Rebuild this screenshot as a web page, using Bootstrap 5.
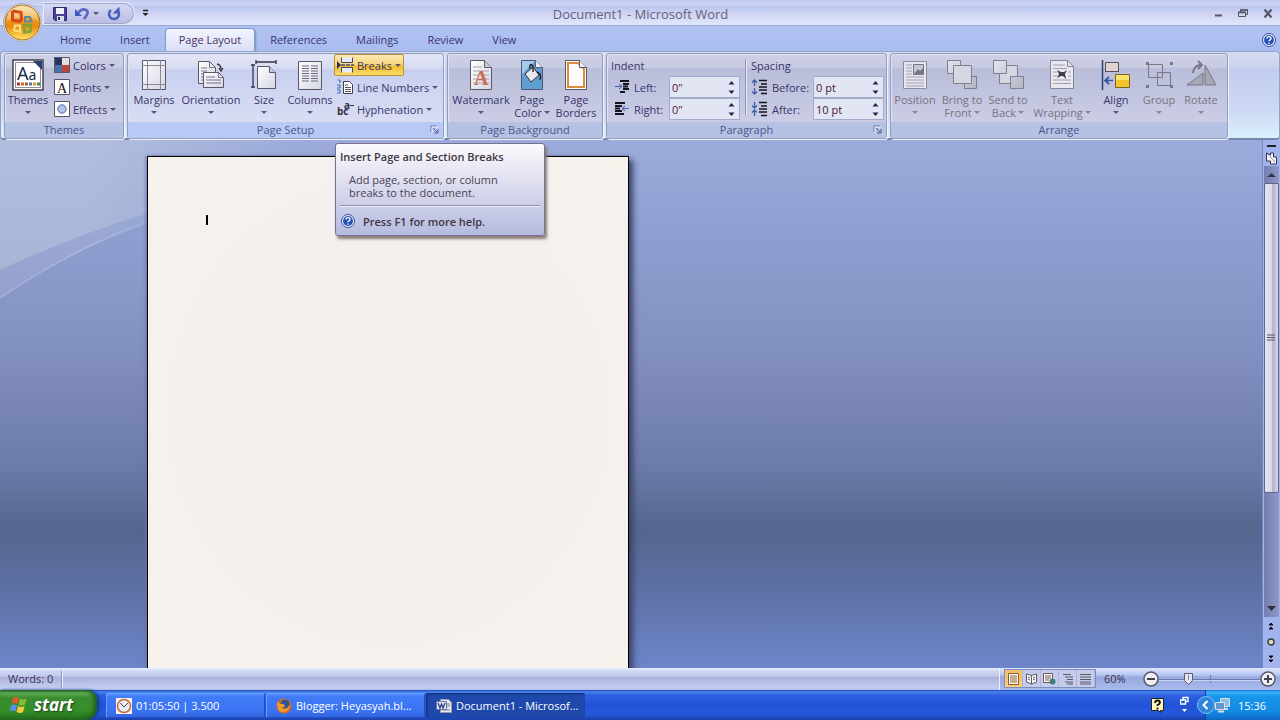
<!DOCTYPE html>
<html lang="en">
<head>
<meta charset="utf-8">
<meta name="viewport" content="width=device-width, initial-scale=1">
<title>Document1 - Microsoft Word</title>
<link href="https://cdn.jsdelivr.net/npm/bootstrap@5.3.0/dist/css/bootstrap.min.css" rel="stylesheet">
<style>
body{font-family:"Open Sans","Noto Sans",sans-serif;font-size:11px;line-height:13px;color:#39346a;background:#acbdf0}
button,input{font:inherit;color:inherit}
.app-window{height:100vh;min-height:480px}
button.flat{border:0;background:none;padding:0}
svg{flex:none;display:block}
.defs{width:0;height:0;position:absolute}
/* title bar */
.title-bar{height:26px;background:linear-gradient(#c3cbf1 0,#cfd6f6 5px,#bac5ef 6px,#d2d6f3 15px,#dfe8fc 25px);border-bottom:1px solid #98a8cf}
.office-btn{left:3px;top:3px;z-index:3}
.quick-bar{height:21px;margin-left:44px;margin-top:3px;padding:0 12px 0 9px;gap:8px;border:1px solid #a3a5c9;border-left:0;border-radius:0 11px 11px 0;background:linear-gradient(#d5d9f2,#babde2);box-shadow:0 0 0 1px #e7eafa}
.win-title{font-size:13px;line-height:18px;color:#665f80;padding:5px 82px 0 0}
.win-buttons{gap:15px;padding:9px 7px 0 0}
/* tabs */
.tab-row{height:25px;padding:2px 4px 0 46px;background:linear-gradient(#b2c3f3,#a9bcf0)}
.tab-row .nav-link{font-size:11px;line-height:14px;color:#39346a;padding:4px 13px 5px;border:1px solid transparent;border-bottom:0;border-radius:4px 4px 0 0}
.tab-row .nav-link.active{background:linear-gradient(#f3f5ff,#d9def5);border-color:#7f9bd0;color:#4a2f63;box-shadow:1px 1px 2px #7d90c4}
.tab-list{gap:1px}
/* ribbon */
.ribbon{height:89px;padding:1px 3px;background:linear-gradient(#d6dcf0 0,#ccd3ee 14px,#c2cced 17px,#cedaf4 60px,#d9f1fc 86px);border:1px solid #8ea4c9;border-bottom:2px solid #7886ab;border-radius:4px;gap:3px}
.grp{height:86px;border:1px solid #959bbd;border-radius:3px;background:linear-gradient(#cdd0e6 0,#c8cbe2 13px,#b9bdd9 15px,#cbcde6 67px);box-shadow:1px 1px 0 #eef2fd,inset 1px 1px 0 #dfe2f2}
.grp.lit{background:linear-gradient(#e3e6f5 0,#d8dcf2 14px,#c8cfef 16px,#d9ddf4 67px)}
.grp-body{height:68px}
.grp-name{height:16px;line-height:16px;text-align:center;color:#4b568f;background:#b6c2e4;position:relative}
.lit .grp-name{background:#b7c9f4}
.launcher{right:4px;top:3px}
.g-themes{width:120px}.g-setup{width:317px}.g-bg{width:156px}.g-para{width:281px}.g-arr{width:338px}
.big{display:flex;flex-direction:column;align-items:center;white-space:nowrap;padding-top:3px!important}
.big .ico{height:36px;display:flex;align-items:center}
.big .lbl{height:13px;display:flex;align-items:center;gap:2px;margin-top:0}
.big.off{color:#77747f}
.caret{width:0;height:0;border:3px solid transparent;border-top-color:currentColor;border-bottom:0;opacity:.8}
.w36{width:36px}.w40{width:40px}.w44{width:44px}.w46{width:46px}.w48{width:48px}.w52{width:52px}.w62{width:62px}.w66{width:66px}
.small-btn{display:flex;align-items:center;height:22px;gap:3px;padding:0 3px!important;white-space:nowrap;border-radius:2px}
.small-btn.hot{border:1px solid #b6923a!important;padding:0 2px!important;background:linear-gradient(#fbeab4 0,#f6d67c 10px,#f1bd2e 11px,#f8dc66)!important}
.field{height:22px;gap:5px}
.field label{width:30px}
.field.wide label{width:36px;margin-left:-1px;white-space:nowrap}
.field .box{width:71px;height:22px;position:relative}
.field input{width:100%;height:22px;border:1px solid #a4aacb;background:#e2e6f4;padding:0 2px;color:#4b1236;border-radius:0}
.spin{right:5px;top:5px}
.rule{width:2px;height:56px;border-left:1px solid #8f96bb;border-right:1px solid #e3e6f4;margin:5px 4px 0 5px}
/* document */
.desk{position:relative;min-height:0;overflow:hidden;background:linear-gradient(#9cabdb 0,#91a0d2 15%,#828fc1 40%,#6f7dab 60%,#56668f 74%,#5c6ea0 83%,#6d85c9 100%)}
.swoosh{left:0;top:0;z-index:0}
.sheet{width:482px;margin:16px 0 0 147px;border:1px solid #000;border-bottom:0;background:radial-gradient(ellipse at center,#f3f0ee 60%,#f6f3ed);box-shadow:4px 4px 6px #3b4268,-1px 0 3px #6d78a6;z-index:1}
.sheet-text{border:0;background:none;width:100%;height:100%;padding:56px 58px;outline:0;resize:none;font:16px "Liberation Serif",serif}
.insertion{left:58px;top:58px;width:2px;height:10px;background:#000}
.hint{left:335px;top:143px;width:210px;z-index:5;border:1px solid #767190;border-radius:3px;padding:6px 4px 7px;color:#4b4353;background:linear-gradient(#fbfbfd,#dcdcee 45%,#b5bbdf);box-shadow:2px 3px 3px #8b7a75}
.hint p{margin:10px 0 6px 9px}
.hint-head{font-weight:600;color:#40363f}
.hint-help{border-top:1px solid #8f8fb2;box-shadow:inset 0 1px 0 #eef;padding:8px 0 0 1px;gap:8px}
.sb{width:18px;padding-right:1px;background:#a2b4ee;border-left:1px solid #7588bd}
.sb-track{width:15px;background:linear-gradient(90deg,#737eaf,#8f99c8)}
.thumb{height:310px;border:1px solid #62678a;border-radius:2px;background:linear-gradient(90deg,#e4e3f0 0,#d9d9e8 50%,#b6abc8 60%,#ddd8ea)}
/* status bar */
.status{height:22px;background:linear-gradient(#eaf1ff 0,#cdd7f5 3px,#c3c9ea 8px,#acb2de 9px,#c4cdf0 20px,#aabbe8);color:#39304f}
.status .seg{line-height:22px}
.status-right{border-left:1px solid #eef2ff;background:linear-gradient(#dfe7ff 0,#b6c5f2 7px,#98a9df 9px,#a9bbec);width:281px}
.views{border:1px solid #7c8dbf;background:#c5cbea;height:19px;margin:1px 0 0 4px}
.views button{width:18px;height:17px;display:flex;align-items:center;justify-content:center;border-right:1px solid #aeb6d9!important}
.views button.on{background:linear-gradient(#f6bd6b,#f9cf78)}
.zoom-line{width:101px;height:22px}
/* taskbar */
.taskbar{height:30px;background:linear-gradient(#1d48b4 0,#4b84f0 2px,#2e62e0 5px,#2353d6 14px,#2459dc 24px,#1b40ae 30px);color:#fff}
.start-btn{width:97px;background:linear-gradient(#2f6c2a 0,#63ae54 3px,#3a8b31 8px,#369028 20px,#246d1f 30px)!important;border-radius:0 10px 12px 0;box-shadow:inset -3px 0 4px #1f5c1c,2px 0 3px #123b8f;color:#fff;font:italic bold 17px/28px "Noto Sans","Open Sans",sans-serif;text-shadow:1px 1px 2px #1b3d17;gap:6px;padding:0 0 0 10px!important}
.tasks{gap:1px;margin-left:9px;padding-bottom:2px}
.task{width:159px;height:25px;border-radius:2px;background:linear-gradient(#5a94ff 0,#3f7bf7 4px,#3a73f2 18px,#3164dc)!important;box-shadow:inset 1px 1px 0 #6ba0ff,inset -1px -1px 0 #2450bd;gap:4px;padding:0 8px 0 10px!important;color:#fff;white-space:nowrap}
.task.on{background:#1e48a9!important;box-shadow:inset 1px 1px 2px #102d77}
.tray{background:linear-gradient(#0f6fd0 0,#3db2f6 2px,#1796ea 6px,#1289e3 22px,#0f68c4 30px);width:75px;border-left:1px solid #0a3fa0}
.tray-toggle{margin-left:-9px}
</style>
</head>
<body>
<svg class="defs" aria-hidden="true">
  <defs>
    <linearGradient id="gold" x1="0" y1="0" x2="0" y2="1"><stop offset="0" stop-color="#fbe3a8"/><stop offset=".35" stop-color="#efa32f"/><stop offset=".6" stop-color="#e78a12"/><stop offset="1" stop-color="#ffe564"/></linearGradient>
    <linearGradient id="glass" x1="0" y1="0" x2="1" y2="1"><stop offset="0" stop-color="#fff"/><stop offset="1" stop-color="#d4d6e4"/></linearGradient>
    <linearGradient id="gray" x1="0" y1="0" x2="1" y2="1"><stop offset="0" stop-color="#e3e4ee"/><stop offset="1" stop-color="#b4b5c4"/></linearGradient>
    <symbol id="help" viewBox="0 0 14 14"><circle cx="7" cy="7" r="6.500" fill="#e8edfb" stroke="#3a519c"/><circle cx="7" cy="7" r="4.900" fill="#2450b8"/><path d="M5 5.600q0-2 2-2t2 1.800q0 1-1.200 1.600Q7 7.500 7 8.300M7 9.400v1.300" fill="none" stroke="#fff" stroke-width="1.400"/></symbol>
    <symbol id="launch" viewBox="0 0 9 9"><path d="M1 7V1h6" fill="none" stroke="#66709b"/><path d="M3 3l4 4M8 4v4H4" fill="none" stroke="#4b568f"/><path d="M2 8V2h6" fill="none" stroke="#eef"/></symbol>
    <symbol id="spinner" viewBox="0 0 7 13"><path d="M.5 3.500L3.500 0l3 3.500zM.5 9.500L3.500 13l3-3.500z" fill="#26264a"/></symbol>
  </defs>
</svg>

<div class="app-window d-flex flex-column position-relative">
  <button class="office-btn flat position-absolute" aria-label="Office Button">
    <svg width="39" height="39" viewBox="0 0 39 39"><circle cx="19.500" cy="19.500" r="19" fill="#f4f2f5" stroke="#a7a9bd"/><circle cx="19.500" cy="19.500" r="17.500" fill="url(#gold)" stroke="#a66a22"/><path d="M4 17Q4 4 19.500 4T35 17Q20 12 4 17z" fill="#fff" opacity=".3"/>
    <g fill="none" stroke-width="3"><path d="M18 9.500l-7-1.500-1.500 1v8l7 1.500 2-2z" stroke="#d64b17"/><path d="M22 14h5l1.500 4.500H22z" stroke="#5e8a9e" stroke-width="2"/><path d="M12 22.500h5v6l-6-1z" stroke="#ffe07a" stroke-width="2"/><path d="M21 22h6.500v6.500l-6 1z" stroke="#7ba534" stroke-width="2.500"/></g></svg>
  </button>

  <header class="title-bar d-flex">
    <div class="quick-bar d-flex align-items-center">
      <button class="flat" aria-label="Save"><svg width="14" height="14"><path d="M.5.5h13v13H2L.5 12z" fill="#4b3f9a" stroke="#302a70"/><path d="M3 1h8v6H3z" fill="#eef0fc"/><path d="M4 9h7v5H4z" fill="#d6dbe9"/><path d="M5 10h2v3H5z" fill="#302a70"/></svg></button>
      <button class="flat d-flex align-items-center gap-1" aria-label="Undo"><svg width="14" height="13"><path d="M3 6q4-5 8-3t-2 9" fill="none" stroke="#5a6cc6" stroke-width="2.800"/><path d="M0 2v7h7z" fill="#4258b8"/></svg><span class="caret"></span></button>
      <button class="flat" aria-label="Repeat"><svg width="14" height="14"><path d="M10 3a5 5 0 1 1-6 0" fill="none" stroke="#4a60bd" stroke-width="2.600"/><path d="M6 0v7h7z" fill="#4a60bd" transform="rotate(-90 9 3.500)"/></svg></button>
    </div>
    <button class="flat ms-2" aria-label="Customize Quick Access Toolbar"><svg width="7" height="8"><path d="M1 1.500h5" stroke="#222" stroke-width="1.500"/><path d="M.5 4h6L3.500 7z" fill="#222"/></svg></button>
    <div class="win-title flex-grow-1 text-center">Document1 - Microsoft Word</div>
    <div class="win-buttons d-flex align-items-start">
      <button class="flat" aria-label="Minimize"><svg width="9" height="9"><path d="M1 6.500h7" stroke="#555567" stroke-width="2"/></svg></button>
      <button class="flat" aria-label="Restore"><svg width="10" height="9"><path d="M2.500 3V1h7v4.500H8M.5 3h7v4.500h-7z" fill="none" stroke="#555567"/><path d="M0 3.500h8M2 1h8" stroke="#555567" stroke-width="1.500"/></svg></button>
      <button class="flat" aria-label="Close"><svg width="10" height="9"><path d="M1.500.5l7 8M8.500.5l-7 8" stroke="#555567" stroke-width="2.200"/></svg></button>
    </div>
  </header>

  <nav class="tab-row d-flex justify-content-between">
    <div class="tab-list nav flex-nowrap">
      <a class="nav-link" href="#">Home</a>
      <a class="nav-link" href="#">Insert</a>
      <a class="nav-link active" href="#">Page Layout</a>
      <a class="nav-link" href="#">References</a>
      <a class="nav-link" href="#">Mailings</a>
      <a class="nav-link" href="#">Review</a>
      <a class="nav-link" href="#">View</a>
    </div>
    <button class="flat" aria-label="Help"><svg width="14" height="14"><use href="#help"/></svg></button>
  </nav>

  <div class="ribbon d-flex">
    <section class="grp g-themes">
      <div class="grp-body d-flex">
        <button class="flat big w46"><span class="ico"><svg width="32" height="32"><path d="M1 1h30v30H1z" fill="#fff" stroke="#44404f" stroke-width="1.500"/><path d="M3.500 3.500h25v25h-25z" fill="none" stroke="#8d8a99"/><path d="M21 2h9v9z" fill="#2a4070"/><text x="5" y="21" font-size="18" font-family="Noto Sans" fill="#1e2b4b">A<tspan font-size="14">a</tspan></text><path d="M5 25h3" stroke="#a33" stroke-width="3"/><path d="M9 25h3" stroke="#c63" stroke-width="3"/><path d="M13 25h3" stroke="#963" stroke-width="3"/><path d="M17 25h3" stroke="#57a" stroke-width="3"/><path d="M21 25h3" stroke="#c93" stroke-width="3"/><path d="M25 25h3" stroke="#484" stroke-width="3"/></svg></span><span class="lbl">Themes</span><span class="lbl"><i class="caret"></i></span></button>
        <div>
          <button class="flat small-btn"><svg width="16" height="16"><path d="M0 0h8v8H0z" fill="#26345f"/><path d="M8 0h8v8H8z" fill="#e5dfe2"/><path d="M0 8h8v8H0z" fill="#4873a8"/><path d="M8 8h8v8H8z" fill="#c0433b"/><path d="M.5.5h15v15H.5z" fill="none" stroke="#5c5874"/></svg>Colors<i class="caret"></i></button>
          <button class="flat small-btn"><svg width="16" height="16"><path d="M.5.5h15v15H.5z" fill="#fff" stroke="#55526a"/><text x="3" y="13.500" font-size="14" font-family="Liberation Serif" fill="#111">A</text></svg>Fonts<i class="caret"></i></button>
          <button class="flat small-btn"><svg width="16" height="16"><path d="M.5.5h15v15H.5z" fill="#fff" stroke="#55526a"/><circle cx="8" cy="8" r="4.200" fill="#b1c5ee" stroke="#566a9e"/></svg>Effects<i class="caret"></i></button>
        </div>
      </div>
      <div class="grp-name">Themes</div>
    </section>

    <section class="grp lit g-setup">
      <div class="grp-body d-flex">
        <button class="flat big w52"><span class="ico"><svg width="26" height="32"><path d="M1.500 1.500h23v29h-23z" fill="url(#glass)" stroke="#5b5767"/><path d="M6.500 1v30M19.500 1v30M1 6.500h24M1 25.500h24" stroke="#8c8896"/></svg></span><span class="lbl">Margins</span><span class="lbl"><i class="caret"></i></span></button>
        <button class="flat big w62"><span class="ico"><svg width="28" height="30"><path d="M1.500 1.500h11l6 6v16h-17z" fill="url(#glass)" stroke="#5b5767"/><path d="M12.500 1.500v6h6M4 8h6M4 11h6M4 14h4M4 17h4M4 20h3" fill="none" stroke="#77748a"/><path d="M6.500 12.500h15l5 5v10h-20z" fill="url(#glass)" stroke="#5b5767"/><path d="M21.500 12.500v5h5M9 17h9M9 20h15M9 23h15" fill="none" stroke="#77748a"/><path d="M20 4q4 1 4 5M22 8l2 3 2-3" fill="none" stroke="#333" stroke-width="1.300"/></svg></span><span class="lbl">Orientation</span><span class="lbl"><i class="caret"></i></span></button>
        <button class="flat big w44"><span class="ico"><svg width="26" height="32"><path d="M5 3h20M5 1v4M25 1v4M2 6v22M0 6h4M0 28h4" stroke="#35324c" stroke-width="1.300"/><path d="M6.500 7.500h12l6 6v16h-18z" fill="url(#glass)" stroke="#5b5767"/><path d="M18.500 7.500v6h6" fill="#cacbd9" stroke="#5b5767"/></svg></span><span class="lbl">Size</span><span class="lbl"><i class="caret"></i></span></button>
        <button class="flat big w48"><span class="ico"><svg width="26" height="32"><path d="M1.500 2.500h23v28h-23z" fill="url(#glass)" stroke="#5b5767"/><path d="M5 7h7M14 7h7M5 9.500h7M14 9.500h7M5 12h7M14 12h7M5 14.500h7M14 14.500h7M5 17h7M14 17h7M5 19.500h7M14 19.500h7M5 22h7M14 22h7" stroke="#6d6980"/></svg></span><span class="lbl">Columns</span><span class="lbl"><i class="caret"></i></span></button>
        <div>
          <button class="flat small-btn hot"><svg width="17" height="16"><path d="M4.500.5v5h11v-5M4.500 15.500v-5h11v5" fill="#e7ebf6" stroke="#44496a"/><path d="M4 8h13" stroke="#44496a" stroke-width="1.500" stroke-dasharray="4 1"/><path d="M0 4l4 4-4 4z" fill="#26324f"/></svg>Breaks<i class="caret"></i></button>
          <button class="flat small-btn"><svg width="17" height="16"><path d="M1 1h2v3M0 6h3v3H0M0 11h3v3H0" fill="none" stroke="#3f69b3"/><path d="M6.500 2.500h6l3 3v9h-9z" fill="#fff" stroke="#44404f"/><path d="M8 6h3M8 8.500h6M8 10.500h6M8 12.500h6" stroke="#555"/></svg>Line Numbers<i class="caret"></i></button>
          <button class="flat small-btn"><svg width="17" height="16"><text x="0" y="14" font-size="10" font-weight="bold" font-family="Open Sans" fill="#33313d">bc<tspan x="7" y="8">a</tspan></text><path d="M13 4.500h4" stroke="#33313d"/></svg>Hyphenation<i class="caret"></i></button>
        </div>
      </div>
      <div class="grp-name">Page Setup<button class="flat launcher position-absolute" aria-label="Page Setup options"><svg width="9" height="9"><use href="#launch"/></svg></button></div>
    </section>

    <section class="grp g-bg">
      <div class="grp-body d-flex">
        <button class="flat big w66"><span class="ico"><svg width="24" height="32"><path d="M1.500 1.500h14l7 7v22h-21z" fill="url(#glass)" stroke="#5b5767"/><path d="M15.500 1.500v7h7" fill="#cacbd9" stroke="#5b5767"/><path d="M4 8h9M4 12h16M4 16h16M4 20h16M4 24h16" stroke="#a5a2ae"/><text x="5" y="26" font-size="20" font-family="Liberation Serif" font-weight="bold" fill="#d0694f">A</text></svg></span><span class="lbl">Watermark</span><span class="lbl"><i class="caret"></i></span></button>
        <button class="flat big w36"><span class="ico"><svg width="24" height="32"><path d="M1.500 1.500h14l7 7v22h-21z" fill="#5e9fd0" stroke="#4b5878"/><path d="M2 2h13L2 15z" fill="#a6cbe8"/><path d="M15.500 1.500v7h7" fill="#eef" stroke="#5b5767"/><path d="M5 15l8-7 6 8-8 7z" fill="#e9e9ef" stroke="#333"/><path d="M10 10q-1-7 3-3v6M17 13q5 2 3 8" fill="none" stroke="#222" stroke-width="1.400"/></svg></span><span class="lbl">Page</span><span class="lbl">Color<i class="caret"></i></span></button>
        <button class="flat big w52"><span class="ico"><svg width="24" height="32"><path d="M1.500 1.500h14l7 7v22h-21z" fill="#fff" stroke="#5b5767"/><path d="M4 4h10l6 6v18H4z" fill="#fdfdff" stroke="#e08a3c" stroke-width="2"/><path d="M15.500 1.500v7h7" fill="#eef" stroke="#5b5767"/></svg></span><span class="lbl">Page</span><span class="lbl">Borders</span></button>
      </div>
      <div class="grp-name">Page Background</div>
    </section>

    <section class="grp g-para">
      <div class="grp-body d-flex ps-1">
        <div>
          <div class="field d-flex align-items-center">Indent</div>
          <div class="field d-flex align-items-center"><svg class="ms-1" width="14" height="14"><path d="M5 1h10M8 4h7M8 6.500h5M8 9h7M5 12h5" stroke="#14141c" stroke-width="1.800"/><path d="M0 6.500h6M4 4l3 2.500L4 9" fill="none" stroke="#3e5fae"/></svg><label for="il">Left:</label><div class="box"><input id="il" value="0&quot;"><button class="flat spin position-absolute" aria-label="Change left indent"><svg width="7" height="13"><use href="#spinner"/></svg></button></div></div>
          <div class="field d-flex align-items-center"><svg class="ms-1" width="14" height="14"><path d="M0 1h10M0 4h7M0 6.500h5M0 9h7M0 12h9" stroke="#14141c" stroke-width="1.800"/><path d="M8 6.500h6M10 4L7 6.500 10 9" fill="none" stroke="#3e5fae"/></svg><label for="ir">Right:</label><div class="box"><input id="ir" value="0&quot;"><button class="flat spin position-absolute" aria-label="Change right indent"><svg width="7" height="13"><use href="#spinner"/></svg></button></div></div>
        </div>
        <div class="rule"></div>
        <div>
          <div class="field d-flex align-items-center">Spacing</div>
          <div class="field wide d-flex align-items-center"><svg width="17" height="16"><path d="M8 1.500h8M10 5h6M8 11h8M10 14.500h6M8 8h8" stroke="#14141c" stroke-width="1.400"/><path d="M3.500 7V1M1 3.500L3.500 1 6 3.500M3.500 9v6M1 12.500L3.500 15 6 12.500" fill="none" stroke="#3e5fae" stroke-width="1.300"/></svg><label for="sbf">Before:</label><div class="box"><input id="sbf" value="0 pt"><button class="flat spin position-absolute" aria-label="Change spacing before"><svg width="7" height="13"><use href="#spinner"/></svg></button></div></div>
          <div class="field wide d-flex align-items-center"><svg width="17" height="16"><path d="M8 1.500h8M10 5h6M8 11h8M10 14.500h6M8 8h8" stroke="#14141c" stroke-width="1.400"/><path d="M3.500 1v6M1 4.500L3.500 7 6 4.500M3.500 15V9M1 11.500L3.500 9 6 11.500" fill="none" stroke="#3e5fae" stroke-width="1.300"/></svg><label for="saf">After:</label><div class="box"><input id="saf" value="10 pt"><button class="flat spin position-absolute" aria-label="Change spacing after"><svg width="7" height="13"><use href="#spinner"/></svg></button></div></div>
        </div>
      </div>
      <div class="grp-name">Paragraph<button class="flat launcher position-absolute" aria-label="Paragraph options"><svg width="9" height="9"><use href="#launch"/></svg></button></div>
    </section>

    <section class="grp g-arr">
      <div class="grp-body d-flex">
        <button class="flat big off w48"><span class="ico"><svg width="26" height="32"><path d="M1.500 2.500h23v27h-23z" fill="#e6e7f0" stroke="#8b8b99"/><path d="M4 6h6M4 9h6M4 12h6M4 15h6M4 18h18M4 21h18M4 24h18M4 27h18" stroke="#a0a0ad"/><path d="M11.500 5.500h10v10h-10z" fill="#c7c8d6" stroke="#777785"/><path d="M12 15l4-5 2 2 3-3v6z" fill="#777785"/></svg></span><span class="lbl">Position</span><span class="lbl"><i class="caret"></i></span></button>
        <button class="flat big off w46"><span class="ico"><svg width="31" height="32"><g fill="url(#gray)" stroke="#7f7f90"><path d="M.5 1.500h13v13H.5zM17.500 17.500h12v12h-12z"/><path d="M6.500 6.500h18v18h-18z" fill="#d6d7e3"/></g></svg></span><span class="lbl">Bring to</span><span class="lbl">Front<i class="caret"></i></span></button>
        <button class="flat big off w46"><span class="ico"><svg width="31" height="32"><g fill="url(#gray)" stroke="#7f7f90"><path d="M6.500 6.500h18v18h-18z" fill="#d6d7e3"/><path d="M.5 1.500h13v13H.5zM17.500 17.500h13v12h-13z"/></g></svg></span><span class="lbl">Send to</span><span class="lbl">Back<i class="caret"></i></span></button>
        <button class="flat big off w62"><span class="ico"><svg width="26" height="32"><path d="M1.500 1.500h17l6 6v22h-23z" fill="#e8e8f0" stroke="#858593"/><path d="M18.500 1.500v6h6" fill="none" stroke="#858593"/><path d="M4 6h12M4 9.500h14M4 13h4M4 17h4M4 21h18M4 24.500h18M19 13h3M19 17h3" stroke="#a0a0ad"/><path d="M8 11l4 2h3l3-2-2 4 1 5-3-3h-2l-4 2 2-4z" fill="#3f3e4b"/></svg></span><span class="lbl">Text</span><span class="lbl">Wrapping<i class="caret"></i></span></button>
        <button class="flat big w46"><span class="ico"><svg width="30" height="32"><path d="M1.500 1v30" stroke="#2f4173" stroke-width="1.500"/><path d="M4.500 3.500h13v9h-13z" fill="#e1d5cf" stroke="#54505e"/><path d="M14.500 15.500h14v13h-14z" fill="#f2c42c" stroke="#7a6428"/><path d="M15 16h13v5H15z" fill="#fbe06b"/><path d="M4 21.500h8M8 18l-4 3.500L8 25" fill="none" stroke="#33549c" stroke-width="1.700"/></svg></span><span class="lbl">Align</span><span class="lbl"><i class="caret"></i></span></button>
        <button class="flat big off w40"><span class="ico"><svg width="27" height="30"><path d="M2.500 4.500h14v13h-14zM11.500 12.500h13v13h-13z" fill="none" stroke="#777785"/><path d="M0 2h3v3H0zM24 2h3v3h-3zM0 25h3v3H0zM24 25h3v3h-3z" fill="#777785"/></svg></span><span class="lbl">Group</span><span class="lbl"><i class="caret"></i></span></button>
        <button class="flat big off w44"><span class="ico"><svg width="31" height="30"><path d="M1 25L17 13v12zM19 5l11 20H19z" fill="#a6a6b4" stroke="#777785"/><path d="M7 13q1-8 8-8M12 1l4 4-4 4" fill="none" stroke="#777785" stroke-width="2"/></svg></span><span class="lbl">Rotate</span><span class="lbl"><i class="caret"></i></span></button>
      </div>
      <div class="grp-name">Arrange</div>
    </section>
  </div>

  <main class="desk flex-grow-1 d-flex">
    <svg class="swoosh position-absolute" width="300" height="240"><defs><linearGradient id="sw" x1="0" y1="0" x2="1" y2="0"><stop offset=".3" stop-color="#c5cfe0" stop-opacity=".4"/><stop offset="1" stop-color="#c5cfe0" stop-opacity="0"/></linearGradient></defs><path d="M0 0h300v40Q150 60 0 130z" fill="url(#sw)"/><path d="M0 0h300v45Q150 60 0 158z" fill="url(#sw)" opacity=".5"/><path d="M0 158Q75 107 148 82" fill="none" stroke="#b9c4e4" opacity=".4" stroke-width="2"/></svg>
    <div class="sheet position-relative"><textarea class="sheet-text" aria-label="Document text"></textarea><span class="insertion position-absolute"></span></div>
    <div class="sb ms-auto d-flex flex-column align-items-center">
      <svg width="14" height="26"><path d="M3 6h9" stroke="#222" stroke-width="2"/><path d="M2.500 13v8h4v3h6v-7h-3v-4h-3v2z" fill="#f6f6fa" stroke="#33334b"/><path d="M4 14l7 8" stroke="#8a8fa8"/></svg>
      <div class="sb-track flex-grow-1 d-flex flex-column">
        <button class="flat" aria-label="Scroll up"><svg width="15" height="17"><path d="M3 11l4.500-4L12 11z" fill="#3b344e"/></svg></button>
        <div class="thumb d-flex align-items-center justify-content-center"><svg width="8" height="8"><path d="M0 1h8M0 3.500h8M0 6h8" stroke="#55536a"/></svg></div>
        <button class="flat mt-auto" aria-label="Scroll down"><svg width="15" height="17"><path d="M3 6h9l-4.500 5z" fill="#2f2c42"/></svg></button>
      </div>
      <button class="flat" aria-label="Previous page"><svg width="14" height="17"><path d="M5 8l2-2 2 2zM5 12l2-2 2 2z" fill="#111" stroke="#111"/></svg></button>
      <button class="flat" aria-label="Select browse object"><svg width="14" height="17"><circle cx="7" cy="8" r="3" fill="#d9d9c4" stroke="#333" stroke-width="1.300"/></svg></button>
      <button class="flat" aria-label="Next page"><svg width="14" height="17"><path d="M5 5h4L7 7zM5 9h4l-2 2z" fill="#111" stroke="#111"/></svg></button>
    </div>
  </main>

  <div class="hint position-absolute" role="tooltip">
    <div class="hint-head">Insert Page and Section Breaks</div>
    <p>Add page, section, or column<br>breaks to the document.</p>
    <div class="hint-help hint-head d-flex align-items-center"><svg width="14" height="14"><use href="#help"/></svg>Press F1 for more help.</div>
  </div>

  <footer class="status d-flex justify-content-between">
    <div class="seg ps-2 d-flex gap-2">Words: 0<svg width="4" height="22"><path d="M.5 3v17" stroke="#8f96bb"/><path d="M1.500 3v17" stroke="#eef"/></svg></div>
    <div class="status-right d-flex">
      <div class="views d-flex">
        <button class="flat on" aria-label="Print Layout"><svg width="11" height="12"><path d="M.5.5h10v11H.5z" fill="#fff" stroke="#8a5a22"/><path d="M2 3h7M2 5h7M2 7h7M2 9h7" stroke="#8a5a22"/></svg></button>
        <button class="flat" aria-label="Full Screen Reading"><svg width="12" height="12"><path d="M.5 1l5 1.500 5-1.500v8l-5 2-5-2z" fill="#fff" stroke="#5c5868"/><path d="M5.500 2v9M2 4l2 1M2 6l2 1M7 5l2-1M7 7l2-1" stroke="#5c5868"/></svg></button>
        <button class="flat" aria-label="Web Layout"><svg width="13" height="12"><path d="M.5.5h9v9h-9z" fill="#fff" stroke="#77505a"/><path d="M2 3h6M2 5h6M2 7h4" stroke="#77505a"/><circle cx="9.500" cy="8.500" r="3" fill="#3f7f78"/></svg></button>
        <button class="flat" aria-label="Outline"><svg width="11" height="12"><path d="M1 1.500h8M3 4h8M5 6.500h6M3 9h8M5 11h6" stroke="#5c5868"/></svg></button>
        <button class="flat" aria-label="Draft"><svg width="11" height="12"><path d="M0 1.500h11M0 4h11M0 6.500h11M0 9h11M0 11h11" stroke="#5c5868"/></svg></button>
      </div>
      <span class="seg ps-2">60%</span>
      <div class="d-flex align-items-center ms-auto pe-1">
        <button class="flat" aria-label="Zoom out"><svg width="16" height="16"><circle cx="8" cy="8" r="7" fill="#f0f0f5" stroke="#5c5868" stroke-width="1.500"/><path d="M4 8h8" stroke="#44404f" stroke-width="2"/></svg></button>
        <svg class="zoom-line" viewBox="0 0 101 22"><path d="M0 11.500h101M51.500 7v8" stroke="#6a79ac"/><path d="M0 12.500h101" stroke="#cbd6f7"/><path d="M25.500 5.500h8v7l-4 4-4-4z" fill="#e4e5ef" stroke="#5c5868"/><path d="M29.500 7v5" stroke="#8d8a99"/></svg>
        <button class="flat" aria-label="Zoom in"><svg width="16" height="16"><circle cx="8" cy="8" r="7" fill="#f0f0f5" stroke="#5c5868" stroke-width="1.500"/><path d="M4 8h8M8 4v8" stroke="#44404f" stroke-width="2"/></svg></button>
      </div>
    </div>
  </footer>

  <div class="taskbar d-flex align-items-stretch">
    <button class="start-btn flat d-flex align-items-center"><svg width="18" height="18"><path d="M3 2q3-2 6 0L7.500 8q-3-2-6 0z" fill="#e2582a"/><path d="M10 2.500q3 2 6.500 0L15 8.500q-3 2-6.500 0z" fill="#86bb3c"/><path d="M1.200 9.500q3-2 6 0L5.500 15.500q-3-2-6 0z" fill="#5b8de6"/><path d="M8.200 10q3 2 6.500 0L13 16q-3 2-6.500 0z" fill="#f4c93a"/></svg>start</button>
    <div class="tasks d-flex align-items-end flex-grow-1">
      <button class="task flat d-flex align-items-center"><svg width="16" height="16"><path d="M0 0h16v16H0z" fill="#f7efe8"/><circle cx="8" cy="8" r="6.500" fill="#e8edf3" stroke="#c26a3d" stroke-width="1.500"/><path d="M4.500 5L8 9l4-4" fill="none" stroke="#444"/></svg>01:05:50 | 3.500</button>
      <button class="task flat d-flex align-items-center"><svg width="16" height="16"><circle cx="8" cy="8" r="7.500" fill="#d96a1e"/><circle cx="9" cy="6" r="4.500" fill="#31558f"/><path d="M1 4q2 0 3 2 4-1 5 2-1 2-4 2 4 3 9-3-1 7-7 7T1 4z" fill="#f19a2c"/></svg>Blogger: Heyasyah.bl...</button>
      <button class="task on flat d-flex align-items-center"><svg width="16" height="16"><path d="M4.500 1.500h8l3 3v10h-11z" fill="#e9edf8" stroke="#99a"/><path d="M11 6h3M11 8h3M6 12h8" stroke="#778"/><path d="M.5 3.500h10v8H.5z" fill="#dfe5f7" stroke="#6b77a8"/><path d="M2 5l2 5 1.500-4L7 10l2-5" fill="none" stroke="#2d3f86" stroke-width="1.300"/></svg>Document1 - Microsof...</button>
    </div>
    <div class="d-flex align-items-center gap-3 pe-3">
      <svg width="13" height="15"><path d="M.5.500h12v12h-3v2l-2-2h-7z" fill="#fdf6bd" stroke="#222"/><path d="M4 5q0-2.500 2.500-2.500T9 4.500q0 1.500-2.500 2.500v1M6.500 9.500v2" fill="none" stroke="#111" stroke-width="1.800"/></svg>
      <svg width="9" height="18"><path d="M3 4V1.500h5v4H6M.5 4h5v4h-5z" fill="none" stroke="#fff" stroke-width="1.300"/><path d="M2 13h5l-2.500 3z" fill="#fff"/></svg>
    </div>
    <div class="tray d-flex align-items-center">
      <button class="flat tray-toggle" aria-label="Show hidden icons"><svg width="18" height="18"><circle cx="9" cy="9" r="8.500" fill="#2d86dc" stroke="#7fc0f5"/><path d="M10.500 5L6.500 9l4 4" fill="none" stroke="#fff" stroke-width="2"/></svg></button>
      <svg width="15" height="15"><path d="M5.500.5h9v8h-9z" fill="#8fbfe6" stroke="#dde"/><path d="M.5 4.500h9v7h-9z" fill="#5f98d2" stroke="#dde"/><path d="M3 13.500h6M9 11h4" stroke="#dde" stroke-width="2"/></svg>
      <span class="ms-2">15:36</span>
    </div>
  </div>
</div>
<script src="https://cdn.jsdelivr.net/npm/bootstrap@5.3.0/dist/js/bootstrap.bundle.min.js"></script>
</body>
</html>
